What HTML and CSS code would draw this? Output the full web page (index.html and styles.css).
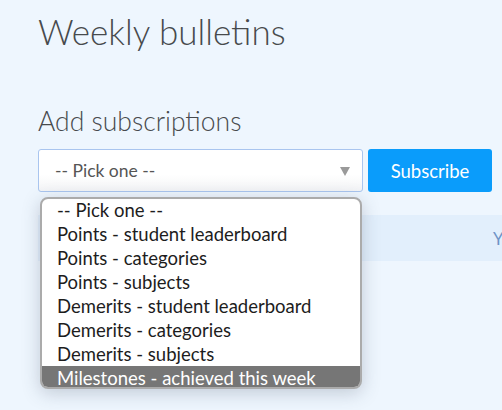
FILE: index.html
```html
<!DOCTYPE html>
<html>
<head>
<meta charset="utf-8">
<link rel="stylesheet" href="styles.css">
</head>
<body>
<div class="page">
  <h1 class="title">Weekly bulletins</h1>
  <h2 class="subtitle">Add subscriptions</h2>
  <div class="form-row">
    <div class="select">
      <span class="select-value">-- Pick one --</span>
      <span class="select-arrow"></span>
    </div>
    <button class="btn">Subscribe</button>
  </div>
  <div class="table-head">
    <span class="th">Your subscriptions</span>
  </div>
  <div class="dropdown">
    <ul class="options">
      <li class="opt">-- Pick one --</li>
      <li class="opt">Points - student leaderboard</li>
      <li class="opt">Points - categories</li>
      <li class="opt">Points - subjects</li>
      <li class="opt">Demerits - student leaderboard</li>
      <li class="opt">Demerits - categories</li>
      <li class="opt">Demerits - subjects</li>
      <li class="opt opt-active">Milestones - achieved this week</li>
    </ul>
  </div>
</div>
</body>
</html>
```
FILE: styles.css
```css
html, body {
  margin: 0;
  padding: 0;
  background: #eef6fe;
  overflow: hidden;
}
body {
  width: 502px;
  height: 410px;
  font-family: Lato, "Open Sans", sans-serif;
}
.page {
  position: relative;
  padding: 11px 0 0 38px;
}
.title {
  margin: 0;
  font-size: 35px;
  line-height: 40px;
  font-weight: 300;
  color: #474a4d;
}
.subtitle {
  margin: 54px 0 0;
  font-size: 26.5px;
  line-height: 32px;
  font-weight: 300;
  color: #474a4d;
}
.form-row {
  display: flex;
  gap: 5px;
  margin-top: 12px;
  height: 43px;
}
.select {
  box-sizing: border-box;
  width: 325px;
  height: 43px;
  border: 1px solid #a9c5ef;
  border-radius: 3px;
  background: linear-gradient(#ffffff 60%, #f3f4f6);
  display: flex;
  align-items: center;
  padding-left: 16px;
  position: relative;
}
.select-value {
  font-size: 17.5px;
  color: #555;
}
.select-arrow {
  position: absolute;
  right: 12px;
  top: 17px;
  width: 0;
  height: 0;
  border-left: 5px solid transparent;
  border-right: 5px solid transparent;
  border-top: 9px solid #9a9a9a;
}
.btn {
  box-sizing: border-box;
  width: 124px;
  height: 43px;
  border: 0;
  border-radius: 3px;
  background: #0a9cfb;
  color: #fff;
  font-family: Lato, sans-serif;
  font-size: 18.5px;
  padding: 0;
}
.table-head {
  margin-top: 23px;
  height: 46px;
  background: #e2effc;
  display: flex;
  align-items: center;
  width: 600px;
}
.th {
  margin-left: 455px;
  font-size: 17px;
  color: #6e93c6;
  white-space: nowrap;
}
.dropdown {
  position: absolute;
  left: 40px;
  top: 197px;
  width: 322px;
  height: 192px;
  box-sizing: border-box;
  background: #fff;
  border: 2px solid #ababab;
  border-radius: 8px;
  overflow: hidden;
  box-shadow: 0 4px 18px rgba(60, 70, 90, 0.25);
}
.options {
  margin: -1px 0 0;
  padding: 0;
  list-style: none;
}
.opt {
  height: 24px;
  line-height: 24px;
  padding-left: 15px;
  font-size: 18.5px;
  color: #1d1d1d;
  white-space: nowrap;
}
.opt-active {
  background: #767676;
  color: #fff;
}
```
